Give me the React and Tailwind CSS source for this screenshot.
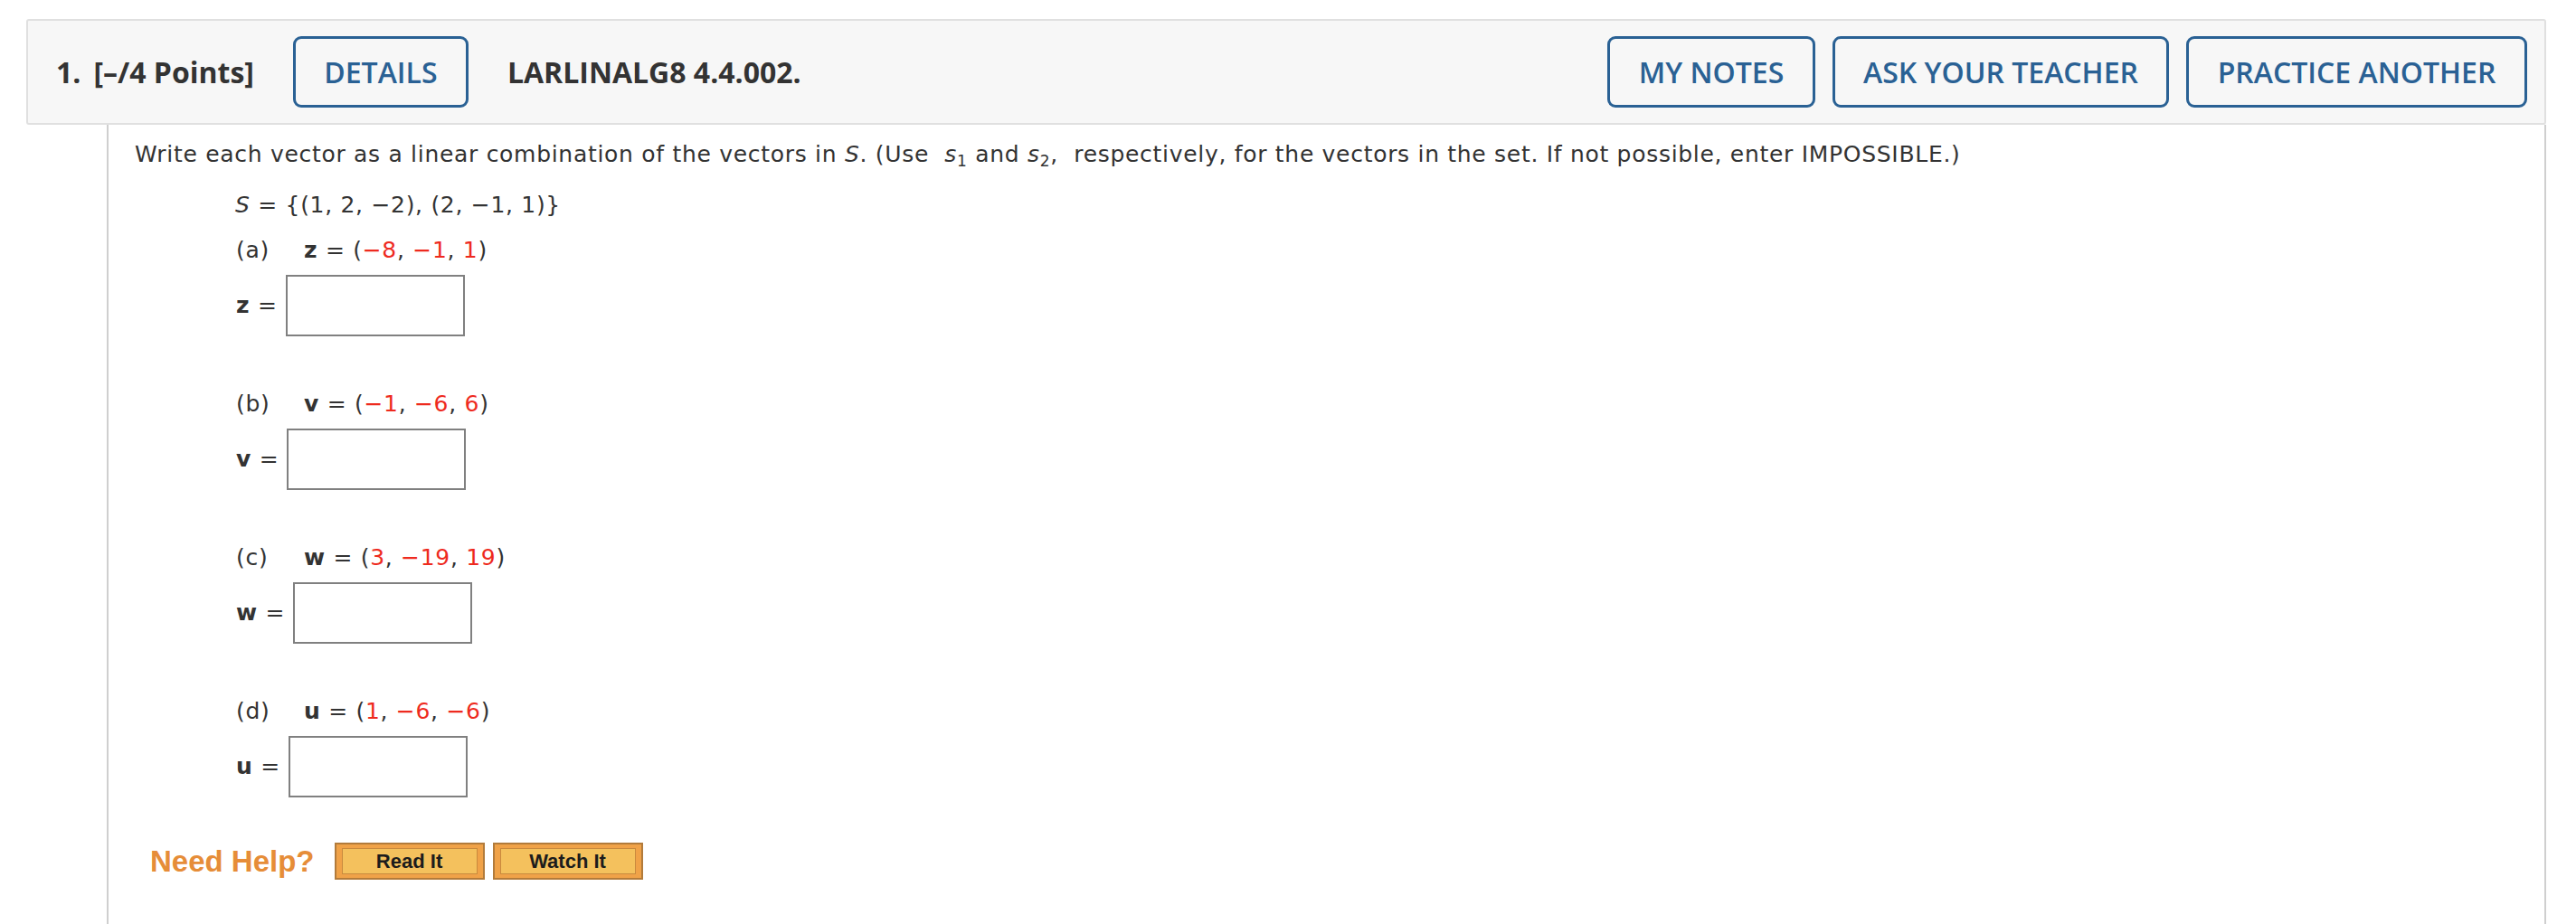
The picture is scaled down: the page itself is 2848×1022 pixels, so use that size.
import React from "react";

const parts = [
  { key: "a", name: "z", values: ["−8", "−1", "1"] },
  { key: "b", name: "v", values: ["−1", "−6", "6"] },
  { key: "c", name: "w", values: ["3", "−19", "19"] },
  { key: "d", name: "u", values: ["1", "−6", "−6"] },
];

const HeaderButton = ({ children, width }) => (
  <button
    className={`h-[79px] ${width} border-[3px] border-[#2a6194] rounded-[9px] text-[#2a6194] text-[32px] font-semibold flex items-center justify-center bg-transparent`}
  >
    {children}
  </button>
);

const HelpButton = ({ children }) => (
  <button className="h-[41px] w-[166px] border-2 border-[#b27b3b] bg-[#f0a248] p-[4px_6px] flex">
    <span className="flex-1 flex items-center justify-center border border-[#c98a3e] bg-[#f4c15d] text-[22px] font-bold text-[#1c1c1c] [font-family:'Liberation_Sans',Arial,sans-serif]">
      {children}
    </span>
  </button>
);

const Part = ({ part, first }) => (
  <div className={`${first ? "mt-[16px]" : "mt-[58px]"} pl-[112px]`}>
    <div className="h-[34px] flex items-center">
      <span className="w-[75px]">({part.key})</span>
      <span className="font-bold">{part.name}</span>
      <span>&nbsp;= (</span>
      {part.values.map((v, i) => (
        <React.Fragment key={i}>
          <span className="text-[#ee2a1e]">{v}</span>
          {i < part.values.length - 1 && <span>,&nbsp;</span>}
        </React.Fragment>
      ))}
      <span>)</span>
    </div>
    <div className="mt-[10px] flex items-center">
      <span className="font-bold">{part.name}</span>
      <span>&nbsp;=</span>
      <div className="ml-[9px] h-[68px] w-[198px] border-2 border-[#808080] bg-white"></div>
    </div>
  </div>
);

export default function App() {
  return (
    <div className="w-[2848px] h-[1022px] overflow-hidden bg-white pt-[21px]">
      <div className="ml-[29px] w-[2786px] h-[117px] bg-[#f7f7f7] border-2 border-[#e0e0e0] rounded-[3px] flex items-center pl-[31px] pr-[19px] text-[32px] text-[#333] [font-family:'Open_Sans',sans-serif]">
        <span className="font-bold">1.</span>
        <span className="ml-[14px] font-bold">[–/4 Points]</span>
        <div className="ml-[43px]">
          <HeaderButton width="w-[194px]">DETAILS</HeaderButton>
        </div>
        <span className="ml-[43px] font-bold">LARLINALG8 4.4.002.</span>
        <div className="ml-auto flex gap-[19px]">
          <HeaderButton width="w-[230px]">MY NOTES</HeaderButton>
          <HeaderButton width="w-[372px]">ASK YOUR TEACHER</HeaderButton>
          <HeaderButton width="w-[377px]">PRACTICE ANOTHER</HeaderButton>
        </div>
      </div>

      <div className="ml-[118px] w-[2697px] h-[884px] border-x-2 border-[#cfcfcf] pl-[29px] pt-[16px] text-[25px] tracking-[0.7px] text-[#333] [font-family:'DejaVu_Sans',Verdana,sans-serif]">
        <div className="h-[34px] flex items-center whitespace-pre">
          <span>
            Write each vector as a linear combination of the vectors in <i>S</i>. (Use  <i>s</i>
            <sub className="text-[17px]">1</sub> and <i>s</i>
            <sub className="text-[17px]">2</sub>,  respectively, for the vectors in the set. If not possible, enter IMPOSSIBLE.)
          </span>
        </div>
        <div className="mt-[22px] pl-[111px] h-[34px] flex items-center">
          <span>
            <i>S</i> = {"{"}(1, 2, −2), (2, −1, 1){"}"}
          </span>
        </div>

        {parts.map((p, i) => (
          <Part key={p.key} part={p} first={i === 0} />
        ))}

        <div className="mt-[46px] pl-[17px] flex items-center">
          <span className="text-[33px] font-bold tracking-normal text-[#e68d38] [font-family:'Liberation_Sans',Arial,sans-serif]">
            Need Help?
          </span>
          <div className="ml-[22px] flex gap-[9px] tracking-normal">
            <HelpButton>Read It</HelpButton>
            <HelpButton>Watch It</HelpButton>
          </div>
        </div>
      </div>
    </div>
  );
}
